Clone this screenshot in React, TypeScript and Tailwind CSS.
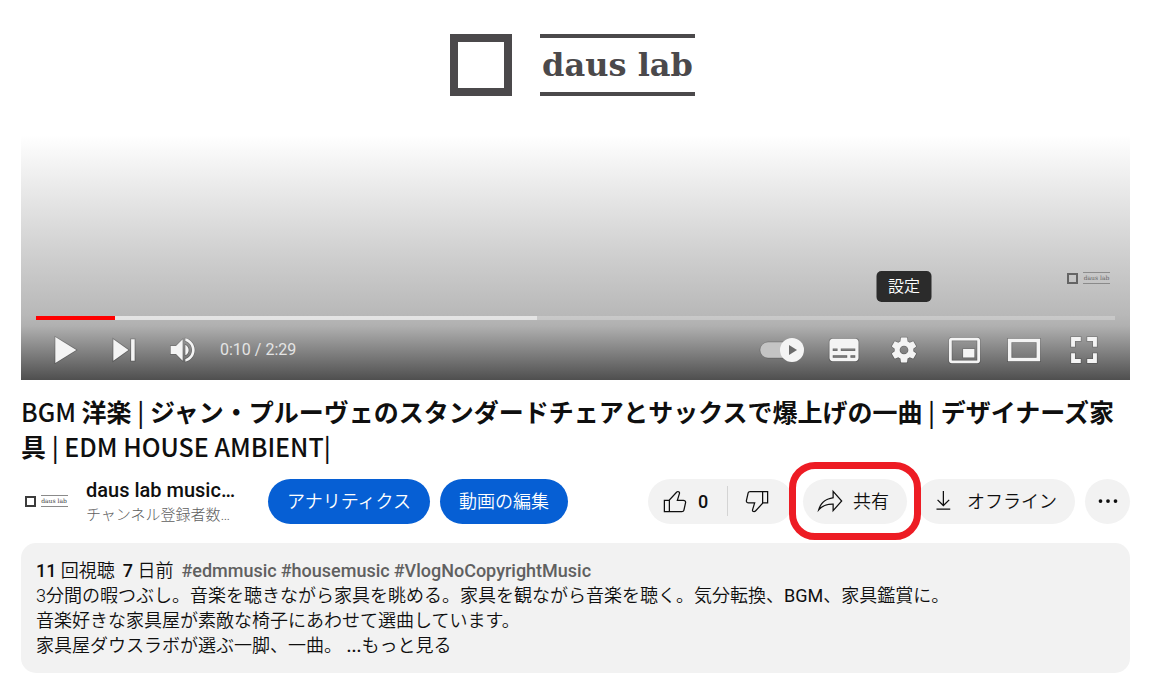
import type { ReactNode } from "react";

const PATHS = {
  play: "M12,26 18.5,22 25,18 18.5,14 12,10z",
  next: "M12,24 20.5,18 12,12V24z M22,12v12h2V12h-2z",
  volume:
    "M8,21 L12,21 L17,26 L17,10 L12,15 L8,15 L8,21 Z M19,14 L19,22 C20.48,21.32 21.5,19.77 21.5,18 C21.5,16.26 20.48,14.74 19,14 Z M19,11.29 C21.89,12.15 24,14.83 24,18 C24,21.17 21.89,23.85 19,24.71 L19,26.77 C23.01,25.86 26,22.28 26,18 C26,13.72 23.01,10.14 19,9.23 L19,11.29 Z",
  captions:
    "M11,11 C9.89,11 9,11.9 9,13 L9,23 C9,24.1 9.89,25 11,25 L25,25 C26.1,25 27,24.1 27,23 L27,13 C27,11.9 26.1,11 25,11 L11,11 Z M11,17 h3 v1.6 h-3 z M20,22.8 h-9 v-1.6 h9 z M25,22.8 h-3 v-1.6 h3 z M25,18.6 h-9 v-1.6 h9 z",
  gear: "m 23.94,18.78 c .03,-0.25 .05,-0.51 .05,-0.78 0,-0.27 -0.02,-0.52 -0.05,-0.78 l 1.68,-1.32 c .15,-0.12 .19,-0.33 .09,-0.51 l -1.6,-2.76 c -0.09,-0.17 -0.31,-0.24 -0.48,-0.17 l -1.99,.8 c -0.41,-0.32 -0.86,-0.58 -1.35,-0.78 l -0.30,-2.12 c -0.02,-0.19 -0.19,-0.33 -0.39,-0.33 l -3.2,0 c -0.2,0 -0.36,.14 -0.39,.33 l -0.30,2.12 c -0.48,.2 -0.93,.47 -1.35,.78 l -1.99,-0.8 c -0.18,-0.07 -0.39,0 -0.48,.17 l -1.6,2.76 c -0.10,.17 -0.05,.39 .09,.51 l 1.68,1.32 c -0.03,.25 -0.05,.52 -0.05,.78 0,.26 .02,.52 .05,.78 l -1.68,1.32 c -0.15,.12 -0.19,.33 -0.09,.51 l 1.6,2.76 c .09,.17 .31,.24 .48,.17 l 1.99,-0.8 c .41,.32 .86,.58 1.35,.78 l .30,2.12 c .02,.19 .19,.33 .39,.33 l 3.2,0 c .2,0 .36,-0.14 .39,-0.33 l .30,-2.12 c .48,-0.2 .93,-0.47 1.35,-0.78 l 1.99,.8 c .18,.07 .39,0 .48,-0.17 l 1.6,-2.76 c .09,-0.17 .05,-0.39 -0.09,-0.51 l -1.68,-1.32 z m -5.94,2.01 c -1.54,0 -2.8,-1.25 -2.8,-2.8 0,-1.54 1.25,-2.8 2.8,-2.8 1.54,0 2.8,1.25 2.8,2.8 0,1.54 -1.25,2.8 -2.8,2.8 z",
  mini: "M25,17 L17,17 L17,23 L25,23 L25,17 Z M29,25 L29,10.98 C29,9.88 28.1,9 27,9 L9,9 C7.9,9 7,9.88 7,10.98 L7,25 C7,26.1 7.9,27 9,27 L27,27 C28.1,27 29,26.1 29,25 Z M27,25.02 L9,25.02 L9,10.97 L27,10.97 L27,25.02 Z",
  theater: "M8,11 h20 v14 h-20 z M10.2,13.2 v9.6 h15.6 v-9.6 z",
  full: "M10,16h2.4v-3.6H16V10h-6z M20,10v2.4h3.6V16H26v-6z M23.6,20v3.6H20V26h6v-6z M12.4,20H10v6h6v-2.4h-3.6z",
  like: "M18.77,11h-4.23l1.52-4.94C16.38,5.03,15.54,4,14.38,4c-0.58,0-1.14,0.24-1.52,0.65L7,11H3v10h4h1h9.43 c1.06,0,1.98-0.67,2.19-1.61l1.34-6C21.23,12.15,20.18,11,18.77,11z M7,20H4v-8h3V20z M19.98,13.17l-1.34,6 C18.54,19.65,18.03,20,17.43,20H8v-8.61l5.6-6.06C13.79,5.12,14.08,5,14.38,5c0.26,0,0.5,0.11,0.63,0.3 c0.07,0.1,0.15,0.26,0.09,0.47l-1.52,4.94L13.18,12h1.35h4.23c0.41,0,0.8,0.17,1.03,0.46C19.92,12.61,20.05,12.86,19.98,13.17z",
  dislike:
    "M17,4h-1H6.57C5.5,4,4.59,4.67,4.38,5.61l-1.34,6C2.77,12.85,3.82,14,5.23,14h4.23l-1.52,4.94C7.62,19.97,8.46,21,9.62,21 c0.58,0,1.14-0.24,1.52-0.65L17,14h4V4H17z M10.4,19.67C10.21,19.88,9.92,20,9.62,20c-0.26,0-0.5-0.11-0.63-0.3 c-0.07-0.1-0.15-0.26-0.09-0.47l1.52-4.94l0.4-1.29H9.46H5.23c-0.41,0-0.8-0.17-1.03-0.46c-0.12-0.15-0.25-0.4-0.18-0.72l1.34-6 C5.46,5.35,5.97,5,6.57,5H16v8.61L10.4,19.67z M20,13h-3V5h3V13z",
  share:
    "M15,5.63L20.66,12L15,18.37V15v-1h-1c-3.96,0-7.14,1-9.75,3.09c1.84-4.07,5.11-6.4,9.89-7.1L15,9.86V9V5.63 M14,3v6 C6.22,10.13,3.11,15.33,2,21c2.78-3.97,6.44-6,12-6v6l8-9L14,3L14,3z",
  download: "M17,18v1H6v-1H17z M16.5,11.4l-0.7-0.7L12,14.4V4h-1v10.4l-3.8-3.7-0.7,0.7l5,5L16.5,11.4z",
  more: "M7.5,12a1.5,1.5 0 1 1-3,0a1.5,1.5 0 1 1 3,0z M13.5,12a1.5,1.5 0 1 1-3,0a1.5,1.5 0 1 1 3,0z M19.5,12a1.5,1.5 0 1 1-3,0a1.5,1.5 0 1 1 3,0z",
};

type IconName = keyof typeof PATHS;

function PlayerButton({
  icon,
  label,
  size = "size-[58px]",
  width = "w-[60px]",
  children,
}: {
  icon: IconName;
  label: string;
  size?: string;
  width?: string;
  children?: ReactNode;
}) {
  return (
    <button type="button" aria-label={label} className={`relative flex h-[60px] items-center justify-center ${width}`}>
      <svg viewBox="0 0 36 36" className={`${size} shrink-0`} aria-hidden="true">
        <path
          d={PATHS[icon]}
          fill="#f4f4f4"
          fillRule="evenodd"
          stroke="#000"
          strokeOpacity="0.2"
          strokeWidth="1"
          style={{ paintOrder: "stroke" }}
        />
      </svg>
      {children}
    </button>
  );
}

function ActionIcon({ icon }: { icon: IconName }) {
  return (
    <svg viewBox="0 0 24 24" className="size-[30px] shrink-0" fill="#0f0f0f" aria-hidden="true">
      <path d={PATHS[icon]} />
    </svg>
  );
}

function SmallLogo() {
  return (
    <span className="flex items-center gap-[5px] text-[#3c3c3c]">
      <span className="size-[11px] border-2 border-current" />
      <span className="flex h-[12px] w-[27px] items-center justify-center border-y border-current/60 font-['DejaVu_Serif',serif] text-[6px] leading-none whitespace-nowrap">
        daus lab
      </span>
    </span>
  );
}

export default function App() {
  return (
    <main
      lang="ja"
      className="min-h-screen bg-white pr-5 pl-[21px] pb-1.5 font-[Roboto,'Noto_Sans_CJK_JP',sans-serif] text-[18px] text-[#0f0f0f]"
    >
      <section
        aria-label="動画プレーヤー"
        className="flex min-h-[380px] flex-col bg-[linear-gradient(to_bottom,#ffffff_135px,#cdcdcd_260px,#b8b8b8_315px,#b0b0b0_326px,#8c8c8c_346px,#4f4f4f_380px)]"
      >
        <div className="flex justify-center gap-7 pt-[34px] pr-1.5 text-[#4b494b]">
          <span className="size-[62px] border-8 border-current" />
          <span className="flex h-[62px] w-[155px] items-center justify-center border-y-4 border-current font-['DejaVu_Serif',serif] text-[32px] leading-none font-bold whitespace-nowrap">
            daus lab
          </span>
        </div>

        <div className="mt-auto flex justify-end pr-5 pb-8 opacity-70">
          <SmallLogo />
        </div>

        <div className="mx-[15px] flex h-1 bg-white/25">
          <div className="w-[79px] bg-[#f00]" />
          <div className="w-[422px] bg-white/50" />
        </div>

        <div className="flex h-[60px] items-center justify-between pr-4 pl-[15px]">
          <div className="flex items-center">
            <PlayerButton icon="play" label="再生" width="w-[58px]" />
            <PlayerButton icon="next" label="次へ" size="size-[64px]" />
            <PlayerButton icon="volume" label="ミュート" size="size-12" />
            <span className="pl-1.5 text-[16px] text-[#e4e4e4]">0:10 / 2:29</span>
          </div>
          <div className="flex items-center">
            <button
              type="button"
              aria-label="自動再生"
              className="flex h-[60px] w-[60px] items-center justify-center"
            >
              <svg viewBox="0 0 60 60" className="size-[60px]" aria-hidden="true">
                <rect x="6" y="22" width="38" height="16" rx="8" fill="#c4c4c4" stroke="#000" strokeOpacity="0.2" />
                <circle cx="38" cy="30" r="12" fill="#f4f4f4" />
                <path d="M35 25v10l8-5z" fill="#6b6b6b" />
              </svg>
            </button>
            <PlayerButton icon="captions" label="字幕" />
            <PlayerButton icon="gear" label="設定" size="size-14">
              <span
                role="tooltip"
                className="absolute bottom-[78px] left-1/2 flex h-[31px] w-[55px] -translate-x-1/2 items-center justify-center rounded-[5px] bg-[#2b2b2b] text-[16px] leading-none font-[350] text-white"
              >
                設定
              </span>
            </PlayerButton>
            <PlayerButton icon="mini" label="ミニプレーヤー" size="size-[51px]" />
            <PlayerButton icon="theater" label="シアターモード" />
            <PlayerButton icon="full" label="全画面" />
          </div>
        </div>
      </section>

      <h1 className="pt-3.5 font-['Noto_Sans_CJK_JP',sans-serif] text-[25px] leading-[35px] font-medium">
        BGM <b>洋楽</b> | <b>ジャン・プルーヴェのスタンダードチェアとサックスで爆上げの一曲</b> | <b>デザイナーズ家具</b>{" "}
        | EDM HOUSE AMBIENT|
      </h1>

      <div className="flex items-center justify-between gap-5 pt-3">
        <div className="flex items-center">
          <a href="#channel" aria-label="daus lab" className="flex size-[50px] items-center justify-center">
            <SmallLogo />
          </a>
          <div className="w-[182px] pl-[15px] whitespace-nowrap">
            <a href="#channel" className="block text-[20px] leading-7 font-medium">
              daus lab music…
            </a>
            <p className="text-[15px] leading-[22px] font-light text-[#606060]">チャンネル登録者数…</p>
          </div>
          <div className="flex gap-2.5 pl-[15px] font-[350] text-white">
            <button type="button" className="h-[45px] rounded-full bg-[#065fd4] px-[19px] whitespace-nowrap">
              アナリティクス
            </button>
            <button type="button" className="h-[45px] rounded-full bg-[#065fd4] px-[19px] whitespace-nowrap">
              動画の編集
            </button>
          </div>
        </div>

        <div className="flex gap-2.5 font-[350] whitespace-nowrap">
          <div className="flex h-[45px] w-[145px] items-center rounded-full bg-[#f2f2f2]">
            <button type="button" aria-label="高く評価" className="flex w-[79px] items-center gap-2 pl-3 font-medium">
              <ActionIcon icon="like" />0
            </button>
            <span className="h-[30px] w-px bg-[#d4d4d4]" />
            <button type="button" aria-label="低く評価" className="pl-3.5">
              <ActionIcon icon="dislike" />
            </button>
          </div>
          <button
            type="button"
            className="relative flex h-[45px] items-center gap-2 rounded-full bg-[#f2f2f2] pr-[18px] pl-3"
          >
            <ActionIcon icon="share" />
            共有
            <span className="pointer-events-none absolute -inset-x-3.5 -top-[17px] -bottom-4 z-10 rounded-[26px] border-[7px] border-[#ed1c24]" />
          </button>
          <button type="button" className="flex h-[45px] items-center gap-2 rounded-full bg-[#f2f2f2] pr-[18px] pl-3">
            <ActionIcon icon="download" />
            オフライン
          </button>
          <button
            type="button"
            aria-label="その他の操作"
            className="flex size-[45px] items-center justify-center rounded-full bg-[#f2f2f2]"
          >
            <ActionIcon icon="more" />
          </button>
        </div>
      </div>

      <section className="mt-[17px] rounded-[15px] bg-[#f2f2f2] p-[15px] leading-[25px] font-[350]">
        <p className="flex gap-2">
          <span>
            <span className="font-medium">11</span> 回視聴
          </span>
          <span>
            <span className="font-medium">7</span> 日前
          </span>
          <span className="flex gap-1 font-medium text-[#606060]">
            <a href="#edmmusic">#edmmusic</a>
            <a href="#housemusic">#housemusic</a>
            <a href="#VlogNoCopyrightMusic">#VlogNoCopyrightMusic</a>
          </span>
        </p>
        <p>
          3分間の暇つぶし。音楽を聴きながら家具を眺める。家具を観ながら音楽を聴く。気分転換、
          <span className="font-normal">BGM</span>、家具鑑賞に。
        </p>
        <p>音楽好きな家具屋が素敵な椅子にあわせて選曲しています。</p>
        <p>
          家具屋ダウスラボが選ぶ一脚、一曲。{" "}
          <button type="button">
            <span className="font-medium">...</span>もっと見る
          </button>
        </p>
      </section>
    </main>
  );
}
